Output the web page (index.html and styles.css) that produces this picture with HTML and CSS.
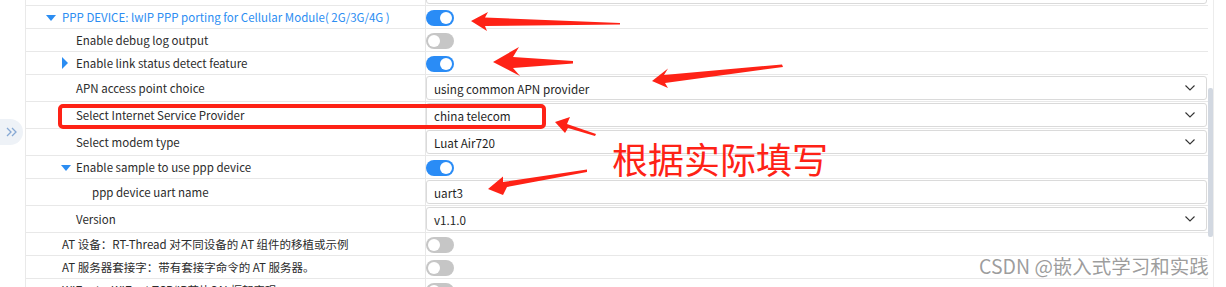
FILE: index.html
```html
<!DOCTYPE html>
<html lang="zh-CN">
<head>
<meta charset="utf-8">
<title>RT-Thread Settings</title>
<link rel="stylesheet" href="styles.css">
</head>
<body>
<div class="page">
  <div class="gutter">
    <div class="expand"><svg width="12" height="10" viewBox="0 0 12 10"><path d="M1 1 L5 5 L1 9 M6 1 L10 5 L6 9" fill="none" stroke="#86a8d4" stroke-width="1.3"/></svg></div>
  </div>
  <div class="tree">
    <div class="rows">
      <div class="row tall">
        <div class="label l2"><span class="caret"></span></div>
        <div class="val"><div class="select"></div></div>
      </div>
      <div class="row">
        <div class="label l1 head"><span class="caret"><i class="tri-down"></i></span><span class="txt">PPP DEVICE: lwIP PPP porting for Cellular Module( 2G/3G/4G )</span></div>
        <div class="val"><span class="toggle on"></span></div>
      </div>
      <div class="row">
        <div class="label l2"><span class="caret"></span><span class="txt">Enable debug log output</span></div>
        <div class="val"><span class="toggle"></span></div>
      </div>
      <div class="row">
        <div class="label l2"><span class="caret"><i class="tri-right"></i></span><span class="txt">Enable link status detect feature</span></div>
        <div class="val"><span class="toggle on"></span></div>
      </div>
      <div class="row tall">
        <div class="label l2"><span class="caret"></span><span class="txt">APN access point choice</span></div>
        <div class="val"><div class="select"><span>using common APN provider</span><svg class="chev" viewBox="0 0 10 6"><path d="M0.5 0.5 L5 5 L9.5 0.5" fill="none" stroke="#333" stroke-width="1.1"/></svg></div></div>
      </div>
      <div class="row tall">
        <div class="label l2"><span class="caret"></span><span class="txt">Select Internet Service Provider</span></div>
        <div class="val"><div class="select"><span>china telecom</span><svg class="chev" viewBox="0 0 10 6"><path d="M0.5 0.5 L5 5 L9.5 0.5" fill="none" stroke="#333" stroke-width="1.1"/></svg></div></div>
      </div>
      <div class="row tall">
        <div class="label l2"><span class="caret"></span><span class="txt">Select modem type</span></div>
        <div class="val"><div class="select"><span>Luat Air720</span><svg class="chev" viewBox="0 0 10 6"><path d="M0.5 0.5 L5 5 L9.5 0.5" fill="none" stroke="#333" stroke-width="1.1"/></svg></div></div>
      </div>
      <div class="row">
        <div class="label l2"><span class="caret"><i class="tri-down"></i></span><span class="txt">Enable sample to use ppp device</span></div>
        <div class="val"><span class="toggle on"></span></div>
      </div>
      <div class="row tall">
        <div class="label l3"><span class="caret"></span><span class="txt">ppp device uart name</span></div>
        <div class="val"><div class="select input"><span>uart3</span></div></div>
      </div>
      <div class="row tall">
        <div class="label l2"><span class="caret"></span><span class="txt">Version</span></div>
        <div class="val"><div class="select"><span>v1.1.0</span><svg class="chev" viewBox="0 0 10 6"><path d="M0.5 0.5 L5 5 L9.5 0.5" fill="none" stroke="#333" stroke-width="1.1"/></svg></div></div>
      </div>
      <div class="row">
        <div class="label l1"><span class="caret"></span><span class="txt">AT 设备：RT-Thread 对不同设备的 AT 组件的移植或示例</span></div>
        <div class="val"><span class="toggle"></span></div>
      </div>
      <div class="row">
        <div class="label l1"><span class="caret"></span><span class="txt">AT 服务器套接字：带有套接字命令的 AT 服务器。</span></div>
        <div class="val"><span class="toggle"></span></div>
      </div>
      <div class="row">
        <div class="label l1"><span class="caret"></span><span class="txt">WIZnet：WIZnet TCP/IP芯片SAL框架实现</span></div>
        <div class="val"><span class="toggle"></span></div>
      </div>
    </div>
  </div>
  <div class="scrollbar"><div class="thumb"></div></div>

  <svg class="annot" width="1226" height="287" viewBox="0 0 1226 287">
    <rect x="60" y="106" width="484" height="21" rx="3" fill="none" stroke="#fe2216" stroke-width="4"/>
    <polygon fill="#fe2216" points="471,21 488,12 485,17.5 620,23 620,24.5 485,26 487,31"/>
    <polygon fill="#fe2216" points="493,62 519,47 513,57 573,61 573,63.5 513,68 520,76"/>
    <polygon fill="#fe2216" points="652,81 668,68.5 664,75 782,64.5 783,67 665,83 668,88"/>
    <polygon fill="#fe2216" points="555,122 570,117 567,124 596,134 595,136 568,128 565,133"/>
    <polygon fill="#fe2216" points="488,189 503,176.5 503,182 587,169.5 587,172 507,187 503,195"/>
  </svg>
  <div class="note">根据实际填写</div>
  <div class="watermark">CSDN @嵌入式学习和实践</div>
</div>
</body>
</html>
```
FILE: styles.css
```css
html, body {
  margin: 0;
  padding: 0;
  background: #ffffff;
}

.page {
  position: relative;
  display: flex;
  width: 1226px;
  height: 287px;
  overflow: hidden;
  font-family: "Noto Sans CJK SC", "Noto Sans", sans-serif;
  font-size: 11.5px;
  color: #2b2b2b;
}

.gutter {
  width: 25px;
  flex: none;
  border-right: 1px solid #e9e9e9;
  padding-top: 119px;
}

.expand {
  width: 23px;
  height: 26px;
  background: #eef2f7;
  border-radius: 0 13px 13px 0;
  display: flex;
  align-items: center;
  justify-content: center;
}

.tree {
  width: 1182px;
  flex: none;
  overflow: hidden;
}

.rows {
  margin-top: -21px;
}

.row {
  display: flex;
  height: 22px;
  border-bottom: 1px solid #e8e8e8;
}

.row.tall {
  height: 26px;
}

.label {
  box-sizing: border-box;
  width: 400px;
  flex: none;
  border-right: 1px solid #e8e8e8;
  display: flex;
  align-items: center;
  white-space: nowrap;
  overflow: hidden;
}

.label.l1 { padding-left: 20px; }
.label.l2 { padding-left: 34px; }
.label.l3 { padding-left: 50px; }

.caret {
  width: 16px;
  flex: none;
  display: flex;
  align-items: center;
}

.txt {
  line-height: 16px;
}

.head .txt {
  color: #2b8df2;
}

.tri-down {
  display: block;
  width: 0;
  height: 0;
  border-left: 5px solid transparent;
  border-right: 5px solid transparent;
  border-top: 6px solid #2b8df2;
  margin-top: 1px;
}

.l2 .tri-down {
  margin-left: 1px;
}

.tri-right {
  display: block;
  width: 0;
  height: 0;
  border-top: 6px solid transparent;
  border-bottom: 6px solid transparent;
  border-left: 6px solid #2b8df2;
  margin-left: 2px;
}

.val {
  flex: 1;
  min-width: 0;
  display: flex;
  align-items: center;
  padding-right: 1px;
}

.toggle {
  position: relative;
  display: block;
  width: 28px;
  height: 16px;
  border-radius: 8px;
  background: #c6c6c6;
  margin-top: 2px;
}

.toggle::after {
  content: "";
  position: absolute;
  left: 2px;
  top: 2px;
  width: 12px;
  height: 12px;
  border-radius: 50%;
  background: #ffffff;
}

.toggle.on {
  background: #2a8cf6;
}

.toggle.on::after {
  left: 14px;
}

.select {
  flex: 1;
  height: 24px;
  box-sizing: border-box;
  border: 1px solid #dadada;
  border-radius: 3px;
  display: flex;
  align-items: center;
  justify-content: space-between;
  padding: 0 11px 0 7px;
  font-size: 11.7px;
  color: #1f1f1f;
}

.chev {
  width: 10px;
  height: 6px;
}

.scrollbar {
  width: 5px;
  flex: none;
  border-right: 1px solid #ececec;
  padding-top: 88px;
}

.thumb {
  width: 5px;
  height: 149px;
  background: #d2d8e1;
  border-radius: 2px;
}

.annot {
  position: absolute;
  left: 0;
  top: 0;
  pointer-events: none;
}

.note {
  position: absolute;
  left: 612px;
  top: 138px;
  font-family: "Noto Sans CJK SC", sans-serif;
  font-size: 36px;
  line-height: 40px;
  color: #fe2216;
  white-space: nowrap;
}

.watermark {
  position: absolute;
  left: 979px;
  top: 254px;
  font-family: "Noto Sans CJK SC", "Liberation Sans", sans-serif;
  font-size: 19.5px;
  line-height: 24px;
  color: rgba(140, 140, 140, 0.85);
  white-space: nowrap;
}
```
